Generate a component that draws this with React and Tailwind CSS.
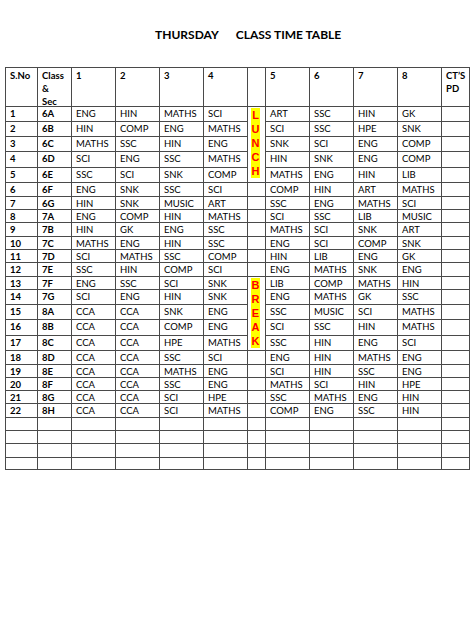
import React from "react";

const rows = [
  ["1", "6A", "ENG", "HIN", "MATHS", "SCI", "ART", "SSC", "HIN", "GK"],
  ["2", "6B", "HIN", "COMP", "ENG", "MATHS", "SCI", "SSC", "HPE", "SNK"],
  ["3", "6C", "MATHS", "SSC", "HIN", "ENG", "SNK", "SCI", "ENG", "COMP"],
  ["4", "6D", "SCI", "ENG", "SSC", "MATHS", "HIN", "SNK", "ENG", "COMP"],
  ["5", "6E", "SSC", "SCI", "SNK", "COMP", "MATHS", "ENG", "HIN", "LIB"],
  ["6", "6F", "ENG", "SNK", "SSC", "SCI", "COMP", "HIN", "ART", "MATHS"],
  ["7", "6G", "HIN", "SNK", "MUSIC", "ART", "SSC", "ENG", "MATHS", "SCI"],
  ["8", "7A", "ENG", "COMP", "HIN", "MATHS", "SCI", "SSC", "LIB", "MUSIC"],
  ["9", "7B", "HIN", "GK", "ENG", "SSC", "MATHS", "SCI", "SNK", "ART"],
  ["10", "7C", "MATHS", "ENG", "HIN", "SSC", "ENG", "SCI", "COMP", "SNK"],
  ["11", "7D", "SCI", "MATHS", "SSC", "COMP", "HIN", "LIB", "ENG", "GK"],
  ["12", "7E", "SSC", "HIN", "COMP", "SCI", "ENG", "MATHS", "SNK", "ENG"],
  ["13", "7F", "ENG", "SSC", "SCI", "SNK", "LIB", "COMP", "MATHS", "HIN"],
  ["14", "7G", "SCI", "ENG", "HIN", "SNK", "ENG", "MATHS", "GK", "SSC"],
  ["15", "8A", "CCA", "CCA", "SNK", "ENG", "SSC", "MUSIC", "SCI", "MATHS"],
  ["16", "8B", "CCA", "CCA", "COMP", "ENG", "SCI", "SSC", "HIN", "MATHS"],
  ["17", "8C", "CCA", "CCA", "HPE", "MATHS", "SSC", "HIN", "ENG", "SCI"],
  ["18", "8D", "CCA", "CCA", "SSC", "SCI", "ENG", "HIN", "MATHS", "ENG"],
  ["19", "8E", "CCA", "CCA", "MATHS", "ENG", "SCI", "HIN", "SSC", "ENG"],
  ["20", "8F", "CCA", "CCA", "SSC", "ENG", "MATHS", "SCI", "HIN", "HPE"],
  ["21", "8G", "CCA", "CCA", "SCI", "HPE", "SSC", "MATHS", "ENG", "HIN"],
  ["22", "8H", "CCA", "CCA", "SCI", "MATHS", "COMP", "ENG", "SSC", "HIN"],
  ["", "", "", "", "", "", "", "", "", ""],
  ["", "", "", "", "", "", "", "", "", ""],
  ["", "", "", "", "", "", "", "", "", ""],
  ["", "", "", "", "", "", "", "", "", ""],
];

const cellCls = "bg-white pl-[4px] pt-[1px] leading-[11px] whitespace-nowrap overflow-visible";

function Vertical({ letters }) {
  return (
    <div className="bg-white row-span-5 flex flex-col items-start pl-[3px] pt-[1px]">
      <div className="flex flex-col bg-[#ffff00] w-[9px]">
        {letters.split("").map((l, i) => (
          <div
            key={i}
            className="h-[14px] leading-[14px] text-center text-[11px] font-bold text-[#ff0000]"
            style={{ fontFamily: '"Liberation Sans", Arial, sans-serif' }}
          >
            {l}
          </div>
        ))}
      </div>
    </div>
  );
}

export default function App() {
  const cells = [];
  const hdr = "bg-white pl-[4px] pt-[1px] leading-[13px] font-bold";
  cells.push(<div key="h0" className={hdr}>S.No</div>);
  cells.push(
    <div key="h1" className={hdr}>
      Class<br />&amp;<br />Sec
    </div>
  );
  ["1", "2", "3", "4"].forEach((p) =>
    cells.push(<div key={"hp" + p} className={hdr}>{p}</div>)
  );
  cells.push(<div key="hl" className="bg-white"></div>);
  ["5", "6", "7", "8"].forEach((p) =>
    cells.push(<div key={"hp" + p} className={hdr}>{p}</div>)
  );
  cells.push(
    <div key="hct" className={hdr}>
      CT’S<br />PD
    </div>
  );

  rows.forEach((r, i) => {
    const n = i + 1;
    cells.push(<div key={`r${n}a`} className={cellCls + " font-bold"}>{r[0]}</div>);
    cells.push(<div key={`r${n}b`} className={cellCls + " font-bold"}>{r[1]}</div>);
    for (let c = 2; c < 6; c++) {
      cells.push(<div key={`r${n}c${c}`} className={cellCls}>{r[c]}</div>);
    }
    if (n === 1) cells.push(<Vertical key="lunch" letters="LUNCH" />);
    else if (n === 13) cells.push(<Vertical key="break" letters="BREAK" />);
    else if ((n >= 2 && n <= 5) || (n >= 14 && n <= 17)) {
      // covered by merged cell
    } else cells.push(<div key={`r${n}l`} className="bg-white"></div>);
    for (let c = 6; c < 10; c++) {
      cells.push(<div key={`r${n}c${c}`} className={cellCls}>{r[c]}</div>);
    }
    cells.push(<div key={`r${n}ct`} className="bg-white"></div>);
  });

  return (
    <div
      className="w-[474px] h-[632px] bg-white text-black overflow-hidden"
      style={{ fontFamily: "Lato, 'Open Sans', sans-serif" }}
    >
      <div className="flex pt-[27px] pl-[155px] gap-[17px] text-[12px] leading-[16px] font-bold text-black">
        <span>THURSDAY</span>
        <span>CLASS TIME TABLE</span>
      </div>
      <div className="mt-[24px] ml-[5px] w-[465px] bg-[#4a4a4a] p-px text-[9.5px]">
        <div className="grid gap-px grid-cols-[31px_33px_43px_43px_43px_43px_17px_43px_43px_43px_43px_27px] grid-rows-[38px_14px_14px_14px_15px_14px_13px_12px_12px_13px_12px_12px_13px_12px_14px_14px_15px_14px_13px_12px_12px_12px_13px_12px_12px_13px_11px]">
          {cells}
        </div>
      </div>
    </div>
  );
}
